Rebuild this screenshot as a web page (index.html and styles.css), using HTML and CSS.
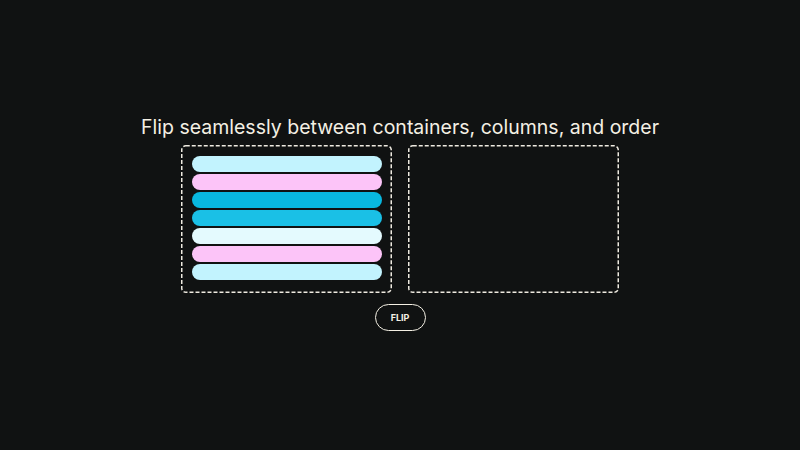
FILE: index.html
```html
<!DOCTYPE html>
<html>
<head>
<meta charset="utf-8">
<link rel="stylesheet" href="styles.css">
</head>
<body>
<main class="stage">
  <h1 class="title">Flip seamlessly between containers, columns, and order</h1>
  <div class="containers">
    <div class="box">
      <svg class="dash" width="211" height="148" viewBox="0 0 211 148"><rect x="0.75" y="0.75" width="209.5" height="146.5" rx="4" ry="4"/></svg>
      <div class="bar c1"></div>
      <div class="bar c2"></div>
      <div class="bar c3"></div>
      <div class="bar c4"></div>
      <div class="bar c5"></div>
      <div class="bar c2"></div>
      <div class="bar c1"></div>
    </div>
    <div class="box">
      <svg class="dash" width="211" height="148" viewBox="0 0 211 148"><rect x="0.75" y="0.75" width="209.5" height="146.5" rx="4" ry="4"/></svg>
    </div>
  </div>
  <button class="flip">FLIP</button>
</main>
</body>
</html>
```
FILE: styles.css
```css
html, body {
  margin: 0;
  padding: 0;
  background: #101212;
  height: 100%;
}
.stage {
  height: 450px;
  display: flex;
  flex-direction: column;
  align-items: center;
  padding-top: 115px;
  box-sizing: border-box;
  font-family: Inter, "Liberation Sans", sans-serif;
}
.title {
  margin: 0;
  font-size: 19.5px;
  font-weight: 400;
  line-height: 24px;
  color: #f4f0e4;
  letter-spacing: 0;
}
.containers {
  margin-top: 6px;
  display: flex;
  gap: 16px;
}
.box {
  position: relative;
  width: 211px;
  height: 148px;
  box-sizing: border-box;
  padding: 10.5px;
  display: flex;
  flex-direction: column;
  gap: 2px;
}
.dash {
  position: absolute;
  left: 0;
  top: 0;
  pointer-events: none;
}
.dash rect {
  fill: none;
  stroke: #eeeae0;
  stroke-width: 1.5;
  stroke-dasharray: 4 2;
}
.bar {
  height: 16px;
  border-radius: 8px;
}
.c1 { background: #c2f3fe; }
.c2 { background: #fcc4f8; }
.c3 { background: #08b8e0; }
.c4 { background: #1ac0e6; }
.c5 { background: #e4fafe; }
.flip {
  margin-top: 11px;
  width: 51px;
  height: 27px;
  border: 1.5px solid #f4f0e4;
  border-radius: 14px;
  background: transparent;
  color: #f4f0e4;
  font-family: Inter, "Liberation Sans", sans-serif;
  font-weight: 700;
  font-size: 9px;
  padding: 0;
}
```
